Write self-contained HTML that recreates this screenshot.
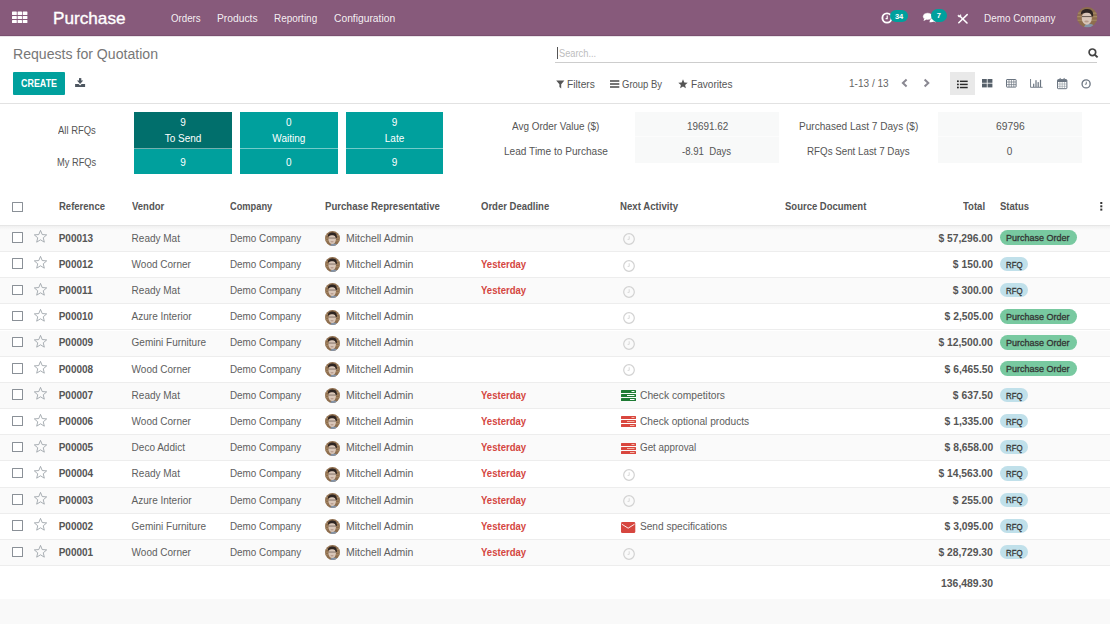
<!DOCTYPE html>
<html><head><meta charset="utf-8"><title>Requests for Quotation</title>
<style>
html,body{margin:0;padding:0;width:1110px;height:624px;overflow:hidden;background:#fff;}
body{position:relative;font-family:"Liberation Sans", sans-serif;}
.t{position:absolute;white-space:nowrap;line-height:1;}
.b{position:absolute;}
svg.b{overflow:visible;}
</style></head><body>
<div class="b" style="left:0.00px;top:0.00px;width:1110.00px;height:624.00px;background:#ffffff;"></div>
<div class="b" style="left:0.00px;top:598.70px;width:1110.00px;height:25.30px;background:#f9f9f9;"></div>
<div class="b" style="left:0.00px;top:0.00px;width:1110.00px;height:35.20px;background:#875A7B;"></div>
<div class="b" style="left:0.00px;top:35.20px;width:1110.00px;height:1.00px;background:#7a4f6f;"></div>
<div class="b" style="left:0.00px;top:36.20px;width:1110.00px;height:1.00px;background:#e9e4e8;"></div>
<svg class="b" style="left:12.00px;top:11.00px;" width="16" height="13" viewBox="0 0 16 13"><rect x="0.00" y="0.50" width="4.80" height="3.50" rx="0.6" fill="#fff"/><rect x="5.60" y="0.50" width="4.40" height="3.50" rx="0.6" fill="#fff"/><rect x="10.70" y="0.50" width="4.70" height="3.50" rx="0.6" fill="#fff"/><rect x="0.00" y="4.90" width="4.80" height="3.10" rx="0.6" fill="#fff"/><rect x="5.60" y="4.90" width="4.40" height="3.10" rx="0.6" fill="#fff"/><rect x="10.70" y="4.90" width="4.70" height="3.10" rx="0.6" fill="#fff"/><rect x="0.00" y="8.90" width="4.80" height="3.10" rx="0.6" fill="#fff"/><rect x="5.60" y="8.90" width="4.40" height="3.10" rx="0.6" fill="#fff"/><rect x="10.70" y="8.90" width="4.70" height="3.10" rx="0.6" fill="#fff"/></svg>
<div class="t" style="left:52.79px;top:10.00px;font-size:17px;color:#ffffff;transform:scaleX(1.0099);transform-origin:0 0;-webkit-text-stroke:0.35px #fff;">Purchase</div>
<div class="t" style="left:171.00px;top:14.00px;font-size:10px;color:rgba(255,255,255,0.92);transform:scaleX(0.9710);transform-origin:0 0;">Orders</div>
<div class="t" style="left:216.90px;top:14.00px;font-size:10px;color:rgba(255,255,255,0.92);transform:scaleX(1.0275);transform-origin:0 0;">Products</div>
<div class="t" style="left:274.20px;top:14.00px;font-size:10px;color:rgba(255,255,255,0.92);transform:scaleX(0.9955);transform-origin:0 0;">Reporting</div>
<div class="t" style="left:333.60px;top:14.00px;font-size:10px;color:rgba(255,255,255,0.92);transform:scaleX(1.0283);transform-origin:0 0;">Configuration</div>
<svg class="b" style="left:881.40px;top:11.50px;" width="12" height="12" viewBox="0 0 12 12"><circle cx="6" cy="6" r="4.6" fill="none" stroke="#fff" stroke-width="1.9"/><path d="M6.2 3.6V6.6H4.6" fill="none" stroke="#fff" stroke-width="1.2"/></svg>
<div class="b" style="left:890.20px;top:9.50px;width:17.80px;height:12.70px;background:#00A09D;border-radius:6.4px;"></div>
<div class="t" style="left:890.20px;width:17.8px;text-align:center;top:13.00px;font-size:7.5px;color:#fff;font-weight:bold;">34</div>
<svg class="b" style="left:922.00px;top:11.00px;" width="15" height="13" viewBox="0 0 15 13"><path d="M7.4 11.2 C9 11.6 11 11.2 12.2 10.6 L13.6 11.8 L13.2 9.8 C14 9 14.2 8 13.8 7 C13 5.6 11 5 9 5.2 Z" fill="#fff"/><ellipse cx="5.6" cy="5.4" rx="4.8" ry="3.6" fill="#fff" stroke="#875A7B" stroke-width="0.5"/><path d="M2.2 7.6 L1.6 10 L4.6 8.6 Z" fill="#fff"/></svg>
<div class="b" style="left:931.10px;top:8.60px;width:15.60px;height:13.20px;background:#00A09D;border-radius:7px;"></div>
<div class="t" style="left:931.10px;width:15.6px;text-align:center;top:12.00px;font-size:7.5px;color:#fff;font-weight:bold;">7</div>
<svg class="b" style="left:957.00px;top:13.00px;" width="12" height="11" viewBox="0 0 12 11"><path d="M1.8 9.8 L10.2 1.6" stroke="#fff" stroke-width="1.5" stroke-linecap="round"/><path d="M2.8 3 L10 10" stroke="#fff" stroke-width="1.6" stroke-linecap="round"/><path d="M0.6 2.6 C0.8 4.2 2.4 4.8 3.6 4 C4.6 3.2 4.4 1.6 3.6 1 L3.2 2.6 L2 2.8 L1.4 1.4 Z" fill="#fff"/></svg>
<div class="t" style="left:984.10px;top:14.00px;font-size:10px;color:rgba(255,255,255,0.92);transform:scaleX(0.9890);transform-origin:0 0;">Demo Company</div>
<svg class="b" style="left:1076.90px;top:7.10px" width="20.40" height="20.40" viewBox="0 0 20 20">
<defs><clipPath id="cnav"><circle cx="10" cy="10" r="10"/></clipPath></defs>
<g clip-path="url(#cnav)">
<rect width="20" height="20" fill="#8e6e4e"/>
<path d="M0 6 H20 M0 9.5 H20 M0 13 H20" stroke="#a88a66" stroke-width="1.2"/>
<path d="M7 20 C7.5 17 9.5 16.5 12 16.5 C14.5 16.5 16.5 17.5 17 20 Z" fill="#8494a8"/>
<ellipse cx="9.6" cy="11" rx="4.9" ry="6.4" fill="#d9c6b8"/>
<path d="M3.8 7.6 C3.6 3.2 7 1.8 10.6 2 C14.2 2.2 16.4 4.4 15.8 9.6 L14.4 9 C14.2 6.8 12.6 5.6 10.4 5.6 C8 5.6 5.6 6.2 3.8 7.6 Z" fill="#2e2522"/>
<path d="M4.8 9.4 H14.6" stroke="#4a3c36" stroke-width="0.8"/>
<ellipse cx="9.4" cy="14.2" rx="2.2" ry="1" fill="#b89c8c"/>
</g></svg>
<div class="t" style="left:13.00px;top:47.00px;font-size:14px;color:#777777;transform:scaleX(1.0069);transform-origin:0 0;">Requests for Quotation</div>
<div class="b" style="left:555.00px;top:61.50px;width:542.40px;height:1.20px;background:#cdcdcd;"></div>
<div class="b" style="left:557.00px;top:47.00px;width:1.00px;height:12.00px;background:#555;"></div>
<div class="t" style="left:558.50px;top:49.00px;font-size:10px;color:#bdbdbd;transform:scaleX(0.9275);transform-origin:0 0;">Search...</div>
<svg class="b" style="left:1087.50px;top:47.60px;" width="11" height="10" viewBox="0 0 11 10"><circle cx="4.4" cy="4.3" r="3.3" fill="none" stroke="#444" stroke-width="1.7"/><path d="M6.8 6.7 L9.6 9.4" stroke="#444" stroke-width="1.9"/></svg>
<div class="b" style="left:12.60px;top:71.50px;width:52.60px;height:23.50px;background:#00A09D;border-radius:1px;"></div>
<div class="t" style="left:20.70px;top:79.00px;font-size:10px;color:#ffffff;font-weight:bold;transform:scaleX(0.8927);transform-origin:0 0;">CREATE</div>
<svg class="b" style="left:74.00px;top:77.00px;" width="12" height="12" viewBox="0 0 12 12"><rect x="5" y="1.1" width="2.3" height="3.6" fill="#4d5660"/><path d="M3 3.6 H9.2 L6.1 6.9 Z" fill="#4d5660"/><path d="M1.1 7.1 H4.6 L6.1 8.4 L7.6 7.1 H11.1 V10.1 H1.1 Z" fill="#4d5660"/></svg>
<svg class="b" style="left:555.50px;top:80.00px;" width="9" height="9" viewBox="0 0 9 9"><path d="M0.2 0.4 H8.4 L5.2 4.2 V8.4 L3.4 7 V4.2 Z" fill="#555"/></svg>
<div class="t" style="left:566.90px;top:80.00px;font-size:10.2px;color:#555555;transform:scaleX(1.0036);transform-origin:0 0;">Filters</div>
<svg class="b" style="left:609.80px;top:80.40px;" width="10" height="8" viewBox="0 0 10 8"><rect x="0" y="0.2" width="9.3" height="1.6" fill="#555"/><rect x="0" y="3.2" width="9.3" height="1.6" fill="#555"/><rect x="0" y="6.2" width="9.3" height="1.6" fill="#555"/></svg>
<div class="t" style="left:622.00px;top:80.00px;font-size:10.2px;color:#555555;transform:scaleX(0.9318);transform-origin:0 0;">Group By</div>
<svg class="b" style="left:678.40px;top:78.90px;" width="10" height="10" viewBox="0 0 10 10"><path d="M5 0.3 L6.3 3.5 L9.7 3.7 L7.1 5.9 L7.9 9.3 L5 7.5 L2.1 9.3 L2.9 5.9 L0.3 3.7 L3.7 3.5 Z" fill="#555"/></svg>
<div class="t" style="left:691.10px;top:80.00px;font-size:10.2px;color:#555555;transform:scaleX(0.9905);transform-origin:0 0;">Favorites</div>
<div class="t" style="left:848.50px;top:79.00px;font-size:10px;color:#666666;transform:scaleX(1.0050);transform-origin:0 0;">1-13 / 13</div>
<svg class="b" style="left:901.00px;top:78.10px;" width="8" height="10" viewBox="0 0 8 10"><path d="M5.6 1.4 L1.9 4.9 L5.6 8.4" fill="none" stroke="#8a8892" stroke-width="2"/></svg>
<svg class="b" style="left:922.50px;top:78.10px;" width="8" height="10" viewBox="0 0 8 10"><path d="M1.6 1.4 L5.3 4.9 L1.6 8.4" fill="none" stroke="#8a8892" stroke-width="2"/></svg>
<div class="b" style="left:950.00px;top:71.90px;width:25.00px;height:23.30px;background:#e9e9e9;"></div>
<svg class="b" style="left:957.30px;top:79.60px;" width="12" height="9" viewBox="0 0 12 9"><circle cx="0.9" cy="1.3" r="0.95" fill="#222"/><circle cx="0.9" cy="4.4" r="0.95" fill="#222"/><circle cx="0.9" cy="7.5" r="0.95" fill="#222"/><rect x="2.9" y="0.6" width="7.8" height="1.45" fill="#2a2a2a"/><rect x="2.9" y="3.7" width="7.8" height="1.45" fill="#2a2a2a"/><rect x="2.9" y="6.8" width="7.8" height="1.45" fill="#2a2a2a"/></svg>
<svg class="b" style="left:982.00px;top:79.40px;" width="11" height="9" viewBox="0 0 11 9"><rect x="0" y="0" width="4.8" height="3.8" fill="#56606a"/><rect x="5.6" y="0" width="4.8" height="3.8" fill="#56606a"/><rect x="0" y="4.6" width="4.8" height="3.8" fill="#56606a"/><rect x="5.6" y="4.6" width="4.8" height="3.8" fill="#56606a"/></svg>
<svg class="b" style="left:1006.00px;top:79.40px;" width="11" height="9" viewBox="0 0 11 9"><rect x="0.5" y="0.5" width="9.6" height="7.6" rx="0.5" fill="none" stroke="#6a7480" stroke-width="1"/><path d="M0.5 3 H10 M0.5 5.6 H10 M3 0.5 V8 M5.4 0.5 V8 M7.8 0.5 V8" stroke="#6a7480" stroke-width="0.7"/></svg>
<svg class="b" style="left:1030.00px;top:79.00px;" width="13" height="9" viewBox="0 0 13 9"><path d="M0.55 0 V8.3 H12.6" fill="none" stroke="#6a7480" stroke-width="0.9"/><rect x="3.1" y="4.7" width="1.2" height="3.3" fill="#6a7480"/><rect x="5.4" y="1.2" width="1.2" height="6.8" fill="#6a7480"/><rect x="7.6" y="3.1" width="1.2" height="4.9" fill="#6a7480"/><rect x="9.9" y="0.8" width="1.2" height="7.2" fill="#6a7480"/></svg>
<svg class="b" style="left:1056.50px;top:78.00px;" width="11" height="11" viewBox="0 0 11 11"><rect x="0.5" y="1.7" width="9.4" height="9" rx="0.7" fill="none" stroke="#6a7480" stroke-width="1"/><rect x="0.5" y="1.7" width="9.4" height="2.3" fill="#6a7480"/><path d="M0.5 6 H10 M0.5 8.3 H10 M2.9 4 V10.5 M5.2 4 V10.5 M7.5 4 V10.5" stroke="#8a939c" stroke-width="0.55"/><path d="M2.2 2.6 V1.2 Q3.2 -0.2 4.2 1.2 V2.6" fill="none" stroke="#6a7480" stroke-width="0.9"/><path d="M6.2 2.6 V1.2 Q7.2 -0.2 8.2 1.2 V2.6" fill="none" stroke="#6a7480" stroke-width="0.9"/></svg>
<svg class="b" style="left:1080.50px;top:78.50px;" width="10" height="10" viewBox="0 0 10 10"><circle cx="5.1" cy="4.9" r="4.05" fill="none" stroke="#6a7480" stroke-width="1.3"/><path d="M5.3 2.7 V5.2 H3.9" fill="none" stroke="#6a7480" stroke-width="0.9"/></svg>
<div class="b" style="left:0.00px;top:102.60px;width:1110.00px;height:1.00px;background:#e2e2e2;"></div>
<div class="t" style="left:58.40px;top:126.00px;font-size:10px;color:#555555;transform:scaleX(0.9450);transform-origin:0 0;">All RFQs</div>
<div class="t" style="left:57.40px;top:158.00px;font-size:10px;color:#555555;transform:scaleX(0.9279);transform-origin:0 0;">My RFQs</div>
<div class="b" style="left:134.00px;top:112.00px;width:98.00px;height:36.40px;background:#016f6c;"></div>
<div class="b" style="left:134.00px;top:148.40px;width:98.00px;height:1.00px;background:rgba(255,255,255,0.45);background-color:#016f6c;background-image:linear-gradient(rgba(255,255,255,0.45),rgba(255,255,255,0.45));"></div>
<div class="b" style="left:134.00px;top:149.40px;width:98.00px;height:24.60px;background:#00A09D;"></div>
<div class="t" style="left:138.00px;width:90px;text-align:center;top:118.00px;font-size:10px;color:#fff;">9</div>
<div class="t" style="left:138.00px;width:90px;text-align:center;top:134.00px;font-size:10px;color:#fff;">To Send</div>
<div class="t" style="left:138.00px;width:90px;text-align:center;top:158.00px;font-size:10px;color:#fff;">9</div>
<div class="b" style="left:240.00px;top:112.00px;width:97.70px;height:36.40px;background:#00A09D;"></div>
<div class="b" style="left:240.00px;top:148.40px;width:97.70px;height:1.00px;background:rgba(255,255,255,0.45);background-color:#00A09D;background-image:linear-gradient(rgba(255,255,255,0.45),rgba(255,255,255,0.45));"></div>
<div class="b" style="left:240.00px;top:149.40px;width:97.70px;height:24.60px;background:#00A09D;"></div>
<div class="t" style="left:243.85px;width:90px;text-align:center;top:118.00px;font-size:10px;color:#fff;">0</div>
<div class="t" style="left:243.85px;width:90px;text-align:center;top:134.00px;font-size:10px;color:#fff;">Waiting</div>
<div class="t" style="left:243.85px;width:90px;text-align:center;top:158.00px;font-size:10px;color:#fff;">0</div>
<div class="b" style="left:345.60px;top:112.00px;width:97.80px;height:36.40px;background:#00A09D;"></div>
<div class="b" style="left:345.60px;top:148.40px;width:97.80px;height:1.00px;background:rgba(255,255,255,0.45);background-color:#00A09D;background-image:linear-gradient(rgba(255,255,255,0.45),rgba(255,255,255,0.45));"></div>
<div class="b" style="left:345.60px;top:149.40px;width:97.80px;height:24.60px;background:#00A09D;"></div>
<div class="t" style="left:349.50px;width:90px;text-align:center;top:118.00px;font-size:10px;color:#fff;">9</div>
<div class="t" style="left:349.50px;width:90px;text-align:center;top:134.00px;font-size:10px;color:#fff;">Late</div>
<div class="t" style="left:349.50px;width:90px;text-align:center;top:158.00px;font-size:10px;color:#fff;">9</div>
<div class="b" style="left:635.30px;top:112.00px;width:143.90px;height:51.40px;background:#f8f9f9;"></div>
<div class="b" style="left:937.60px;top:112.00px;width:144.10px;height:51.40px;background:#f8f9f9;"></div>
<div class="b" style="left:635.30px;top:136.40px;width:143.90px;height:0.90px;background:#fcfcfc;"></div>
<div class="b" style="left:937.60px;top:136.40px;width:144.10px;height:0.90px;background:#fcfcfc;"></div>
<div class="t" style="left:512.20px;top:122.00px;font-size:10px;color:#555555;transform:scaleX(0.9920);transform-origin:0 0;">Avg Order Value ($)</div>
<div class="t" style="left:504.00px;top:147.00px;font-size:10px;color:#555555;transform:scaleX(1.0097);transform-origin:0 0;">Lead Time to Purchase</div>
<div class="t" style="left:686.80px;top:122.00px;font-size:10px;color:#555555;transform:scaleX(0.9905);transform-origin:0 0;">19691.62</div>
<div class="t" style="left:681.90px;top:147.00px;font-size:10px;color:#555555;transform:scaleX(0.9615);transform-origin:0 0;">-8.91&nbsp; Days</div>
<div class="t" style="left:799.30px;top:122.00px;font-size:10px;color:#555555;transform:scaleX(1.0076);transform-origin:0 0;">Purchased Last 7 Days ($)</div>
<div class="t" style="left:807.30px;top:147.00px;font-size:10px;color:#555555;transform:scaleX(0.9771);transform-origin:0 0;">RFQs Sent Last 7 Days</div>
<div class="t" style="left:995.50px;top:122.00px;font-size:10px;color:#555555;transform:scaleX(1.0286);transform-origin:0 0;">69796</div>
<div class="t" style="left:944.60px;width:130px;text-align:center;top:147.00px;font-size:10px;color:#555555;">0</div>
<div class="b" style="left:12.10px;top:201.50px;width:10.6px;height:10.4px;border:1px solid #8a9097;box-sizing:border-box;border-radius:0.5px;background:#fff"></div>
<div class="t" style="left:58.70px;top:202.00px;font-size:10px;color:#555555;font-weight:bold;transform:scaleX(0.9510);transform-origin:0 0;">Reference</div>
<div class="t" style="left:132.20px;top:202.00px;font-size:10px;color:#555555;font-weight:bold;transform:scaleX(0.9500);transform-origin:0 0;">Vendor</div>
<div class="t" style="left:229.90px;top:202.00px;font-size:10px;color:#555555;font-weight:bold;transform:scaleX(0.9261);transform-origin:0 0;">Company</div>
<div class="t" style="left:325.00px;top:202.00px;font-size:10px;color:#555555;font-weight:bold;transform:scaleX(0.9608);transform-origin:0 0;">Purchase Representative</div>
<div class="t" style="left:481.00px;top:202.00px;font-size:10px;color:#555555;font-weight:bold;transform:scaleX(0.9514);transform-origin:0 0;">Order Deadline</div>
<div class="t" style="left:619.70px;top:202.00px;font-size:10px;color:#555555;font-weight:bold;transform:scaleX(0.9656);transform-origin:0 0;">Next Activity</div>
<div class="t" style="left:785.40px;top:202.00px;font-size:10px;color:#555555;font-weight:bold;transform:scaleX(0.9500);transform-origin:0 0;">Source Document</div>
<div class="t" style="left:999.70px;top:202.00px;font-size:10px;color:#555555;font-weight:bold;transform:scaleX(0.9484);transform-origin:0 0;">Status</div>
<div class="t" style="left:963.30px;top:202.00px;font-size:10px;color:#555555;font-weight:bold;transform:scaleX(0.9522);transform-origin:0 0;">Total</div>
<svg class="b" style="left:1099.50px;top:202.00px;" width="3" height="9" viewBox="0 0 3 9"><rect x="0.3" y="0" width="2" height="2" fill="#333"/><rect x="0.3" y="3.3" width="2" height="2" fill="#333"/><rect x="0.3" y="6.6" width="2" height="2" fill="#333"/></svg>
<div class="b" style="left:0.00px;top:224.80px;width:1110.00px;height:1.00px;background:#e6e6e6;"></div>
<div class="b" style="left:0.00px;top:225.80px;width:1110.00px;height:25.00px;background:#fafafa;"></div>
<div class="b" style="left:0.00px;top:225.80px;width:1110.00px;height:4.00px;background:linear-gradient(#f0f0f0,#fafafa);"></div>
<div class="b" style="left:0.00px;top:250.80px;width:1110.00px;height:1.00px;background:#ededed;"></div>
<div class="b" style="left:12.20px;top:232.20px;width:10.6px;height:10.4px;border:1px solid #8a9097;box-sizing:border-box;border-radius:0.5px;background:#fff"></div>
<svg class="b" style="left:34.45px;top:230.10px;" width="13" height="13" viewBox="0 0 13 13"><path d="M6.50 0.40 L8.20 4.55 L12.68 4.89 L9.26 7.80 L10.32 12.16 L6.50 9.80 L2.68 12.16 L3.74 7.80 L0.32 4.89 L4.80 4.55 Z" fill="none" stroke="#9aa0a6" stroke-width="0.85" stroke-linejoin="round"/></svg>
<div class="t" style="left:58.70px;top:234.00px;font-size:10px;color:#555555;font-weight:bold;">P00013</div>
<div class="t" style="left:131.60px;top:234.00px;font-size:10px;color:#5e5e5e;">Ready Mat</div>
<div class="t" style="left:229.90px;top:234.00px;font-size:10px;color:#5e5e5e;transform:scaleX(0.9863);transform-origin:0 0;">Demo Company</div>
<svg class="b" style="left:325.00px;top:230.90px" width="15.00" height="15.00" viewBox="0 0 20 20">
<defs><clipPath id="cr0"><circle cx="10" cy="10" r="10"/></clipPath></defs>
<g clip-path="url(#cr0)">
<rect width="20" height="20" fill="#8e6e4e"/>
<path d="M0 6 H20 M0 9.5 H20 M0 13 H20" stroke="#a88a66" stroke-width="1.2"/>
<path d="M7 20 C7.5 17 9.5 16.5 12 16.5 C14.5 16.5 16.5 17.5 17 20 Z" fill="#8494a8"/>
<ellipse cx="9.6" cy="11" rx="4.9" ry="6.4" fill="#d9c6b8"/>
<path d="M3.8 7.6 C3.6 3.2 7 1.8 10.6 2 C14.2 2.2 16.4 4.4 15.8 9.6 L14.4 9 C14.2 6.8 12.6 5.6 10.4 5.6 C8 5.6 5.6 6.2 3.8 7.6 Z" fill="#2e2522"/>
<path d="M4.8 9.4 H14.6" stroke="#4a3c36" stroke-width="0.8"/>
<ellipse cx="9.4" cy="14.2" rx="2.2" ry="1" fill="#b89c8c"/>
</g></svg>
<div class="t" style="left:345.60px;top:234.00px;font-size:10px;color:#5e5e5e;transform:scaleX(1.0446);transform-origin:0 0;">Mitchell Admin</div>
<svg class="b" style="left:622.60px;top:233.40px;" width="12" height="12" viewBox="0 0 12 12"><circle cx="6" cy="6" r="5.3" fill="none" stroke="#d2d2d2" stroke-width="1.2"/><path d="M6.2 3.2 V6.4 H4.6" fill="none" stroke="#d6d6d6" stroke-width="0.9"/></svg>
<div class="t" style="right:117.10px;text-align:right;top:234.00px;font-size:10px;color:#555555;font-weight:bold;transform:scaleX(1.03);transform-origin:100% 0;">$ 57,296.00</div>
<div class="b" style="left:999.50px;top:230.40px;width:77.00px;height:14.60px;background:#78c9a0;border-radius:8px;"></div>
<div class="t" style="left:1005.80px;top:233.00px;font-size:9.8px;color:#333333;transform:scaleX(0.9200);transform-origin:0 0;-webkit-text-stroke:0.3px #333;">Purchase Order</div>
<div class="b" style="left:0.00px;top:277.00px;width:1110.00px;height:1.00px;background:#ededed;"></div>
<div class="b" style="left:12.20px;top:258.40px;width:10.6px;height:10.4px;border:1px solid #8a9097;box-sizing:border-box;border-radius:0.5px;background:#fff"></div>
<svg class="b" style="left:34.45px;top:256.30px;" width="13" height="13" viewBox="0 0 13 13"><path d="M6.50 0.40 L8.20 4.55 L12.68 4.89 L9.26 7.80 L10.32 12.16 L6.50 9.80 L2.68 12.16 L3.74 7.80 L0.32 4.89 L4.80 4.55 Z" fill="none" stroke="#9aa0a6" stroke-width="0.85" stroke-linejoin="round"/></svg>
<div class="t" style="left:58.70px;top:260.00px;font-size:10px;color:#555555;font-weight:bold;">P00012</div>
<div class="t" style="left:131.60px;top:260.00px;font-size:10px;color:#5e5e5e;">Wood Corner</div>
<div class="t" style="left:229.90px;top:260.00px;font-size:10px;color:#5e5e5e;transform:scaleX(0.9863);transform-origin:0 0;">Demo Company</div>
<svg class="b" style="left:325.00px;top:257.10px" width="15.00" height="15.00" viewBox="0 0 20 20">
<defs><clipPath id="cr1"><circle cx="10" cy="10" r="10"/></clipPath></defs>
<g clip-path="url(#cr1)">
<rect width="20" height="20" fill="#8e6e4e"/>
<path d="M0 6 H20 M0 9.5 H20 M0 13 H20" stroke="#a88a66" stroke-width="1.2"/>
<path d="M7 20 C7.5 17 9.5 16.5 12 16.5 C14.5 16.5 16.5 17.5 17 20 Z" fill="#8494a8"/>
<ellipse cx="9.6" cy="11" rx="4.9" ry="6.4" fill="#d9c6b8"/>
<path d="M3.8 7.6 C3.6 3.2 7 1.8 10.6 2 C14.2 2.2 16.4 4.4 15.8 9.6 L14.4 9 C14.2 6.8 12.6 5.6 10.4 5.6 C8 5.6 5.6 6.2 3.8 7.6 Z" fill="#2e2522"/>
<path d="M4.8 9.4 H14.6" stroke="#4a3c36" stroke-width="0.8"/>
<ellipse cx="9.4" cy="14.2" rx="2.2" ry="1" fill="#b89c8c"/>
</g></svg>
<div class="t" style="left:345.60px;top:260.00px;font-size:10px;color:#5e5e5e;transform:scaleX(1.0446);transform-origin:0 0;">Mitchell Admin</div>
<div class="t" style="left:481.00px;top:260.00px;font-size:10px;color:#d4463f;font-weight:bold;transform:scaleX(0.9542);transform-origin:0 0;">Yesterday</div>
<svg class="b" style="left:622.60px;top:259.60px;" width="12" height="12" viewBox="0 0 12 12"><circle cx="6" cy="6" r="5.3" fill="none" stroke="#d2d2d2" stroke-width="1.2"/><path d="M6.2 3.2 V6.4 H4.6" fill="none" stroke="#d6d6d6" stroke-width="0.9"/></svg>
<div class="t" style="right:117.10px;text-align:right;top:260.00px;font-size:10px;color:#555555;font-weight:bold;transform:scaleX(1.03);transform-origin:100% 0;">$ 150.00</div>
<div class="b" style="left:999.50px;top:256.80px;width:28.90px;height:14.30px;background:#c0e0ea;border-radius:8px;"></div>
<div class="t" style="left:1005.50px;top:260.00px;font-size:9.8px;color:#333333;transform:scaleX(0.8000);transform-origin:0 0;-webkit-text-stroke:0.3px #333;">RFQ</div>
<div class="b" style="left:0.00px;top:278.20px;width:1110.00px;height:25.00px;background:#fafafa;"></div>
<div class="b" style="left:0.00px;top:303.20px;width:1110.00px;height:1.00px;background:#ededed;"></div>
<div class="b" style="left:12.20px;top:284.60px;width:10.6px;height:10.4px;border:1px solid #8a9097;box-sizing:border-box;border-radius:0.5px;background:#fff"></div>
<svg class="b" style="left:34.45px;top:282.50px;" width="13" height="13" viewBox="0 0 13 13"><path d="M6.50 0.40 L8.20 4.55 L12.68 4.89 L9.26 7.80 L10.32 12.16 L6.50 9.80 L2.68 12.16 L3.74 7.80 L0.32 4.89 L4.80 4.55 Z" fill="none" stroke="#9aa0a6" stroke-width="0.85" stroke-linejoin="round"/></svg>
<div class="t" style="left:58.70px;top:286.00px;font-size:10px;color:#555555;font-weight:bold;">P00011</div>
<div class="t" style="left:131.60px;top:286.00px;font-size:10px;color:#5e5e5e;">Ready Mat</div>
<div class="t" style="left:229.90px;top:286.00px;font-size:10px;color:#5e5e5e;transform:scaleX(0.9863);transform-origin:0 0;">Demo Company</div>
<svg class="b" style="left:325.00px;top:283.30px" width="15.00" height="15.00" viewBox="0 0 20 20">
<defs><clipPath id="cr2"><circle cx="10" cy="10" r="10"/></clipPath></defs>
<g clip-path="url(#cr2)">
<rect width="20" height="20" fill="#8e6e4e"/>
<path d="M0 6 H20 M0 9.5 H20 M0 13 H20" stroke="#a88a66" stroke-width="1.2"/>
<path d="M7 20 C7.5 17 9.5 16.5 12 16.5 C14.5 16.5 16.5 17.5 17 20 Z" fill="#8494a8"/>
<ellipse cx="9.6" cy="11" rx="4.9" ry="6.4" fill="#d9c6b8"/>
<path d="M3.8 7.6 C3.6 3.2 7 1.8 10.6 2 C14.2 2.2 16.4 4.4 15.8 9.6 L14.4 9 C14.2 6.8 12.6 5.6 10.4 5.6 C8 5.6 5.6 6.2 3.8 7.6 Z" fill="#2e2522"/>
<path d="M4.8 9.4 H14.6" stroke="#4a3c36" stroke-width="0.8"/>
<ellipse cx="9.4" cy="14.2" rx="2.2" ry="1" fill="#b89c8c"/>
</g></svg>
<div class="t" style="left:345.60px;top:286.00px;font-size:10px;color:#5e5e5e;transform:scaleX(1.0446);transform-origin:0 0;">Mitchell Admin</div>
<div class="t" style="left:481.00px;top:286.00px;font-size:10px;color:#d4463f;font-weight:bold;transform:scaleX(0.9542);transform-origin:0 0;">Yesterday</div>
<svg class="b" style="left:622.60px;top:285.80px;" width="12" height="12" viewBox="0 0 12 12"><circle cx="6" cy="6" r="5.3" fill="none" stroke="#d2d2d2" stroke-width="1.2"/><path d="M6.2 3.2 V6.4 H4.6" fill="none" stroke="#d6d6d6" stroke-width="0.9"/></svg>
<div class="t" style="right:117.10px;text-align:right;top:286.00px;font-size:10px;color:#555555;font-weight:bold;transform:scaleX(1.03);transform-origin:100% 0;">$ 300.00</div>
<div class="b" style="left:999.50px;top:283.00px;width:28.90px;height:14.30px;background:#c0e0ea;border-radius:8px;"></div>
<div class="t" style="left:1005.50px;top:286.00px;font-size:9.8px;color:#333333;transform:scaleX(0.8000);transform-origin:0 0;-webkit-text-stroke:0.3px #333;">RFQ</div>
<div class="b" style="left:0.00px;top:329.40px;width:1110.00px;height:1.00px;background:#ededed;"></div>
<div class="b" style="left:12.20px;top:310.80px;width:10.6px;height:10.4px;border:1px solid #8a9097;box-sizing:border-box;border-radius:0.5px;background:#fff"></div>
<svg class="b" style="left:34.45px;top:308.70px;" width="13" height="13" viewBox="0 0 13 13"><path d="M6.50 0.40 L8.20 4.55 L12.68 4.89 L9.26 7.80 L10.32 12.16 L6.50 9.80 L2.68 12.16 L3.74 7.80 L0.32 4.89 L4.80 4.55 Z" fill="none" stroke="#9aa0a6" stroke-width="0.85" stroke-linejoin="round"/></svg>
<div class="t" style="left:58.70px;top:312.00px;font-size:10px;color:#555555;font-weight:bold;">P00010</div>
<div class="t" style="left:131.60px;top:312.00px;font-size:10px;color:#5e5e5e;">Azure Interior</div>
<div class="t" style="left:229.90px;top:312.00px;font-size:10px;color:#5e5e5e;transform:scaleX(0.9863);transform-origin:0 0;">Demo Company</div>
<svg class="b" style="left:325.00px;top:309.50px" width="15.00" height="15.00" viewBox="0 0 20 20">
<defs><clipPath id="cr3"><circle cx="10" cy="10" r="10"/></clipPath></defs>
<g clip-path="url(#cr3)">
<rect width="20" height="20" fill="#8e6e4e"/>
<path d="M0 6 H20 M0 9.5 H20 M0 13 H20" stroke="#a88a66" stroke-width="1.2"/>
<path d="M7 20 C7.5 17 9.5 16.5 12 16.5 C14.5 16.5 16.5 17.5 17 20 Z" fill="#8494a8"/>
<ellipse cx="9.6" cy="11" rx="4.9" ry="6.4" fill="#d9c6b8"/>
<path d="M3.8 7.6 C3.6 3.2 7 1.8 10.6 2 C14.2 2.2 16.4 4.4 15.8 9.6 L14.4 9 C14.2 6.8 12.6 5.6 10.4 5.6 C8 5.6 5.6 6.2 3.8 7.6 Z" fill="#2e2522"/>
<path d="M4.8 9.4 H14.6" stroke="#4a3c36" stroke-width="0.8"/>
<ellipse cx="9.4" cy="14.2" rx="2.2" ry="1" fill="#b89c8c"/>
</g></svg>
<div class="t" style="left:345.60px;top:312.00px;font-size:10px;color:#5e5e5e;transform:scaleX(1.0446);transform-origin:0 0;">Mitchell Admin</div>
<svg class="b" style="left:622.60px;top:312.00px;" width="12" height="12" viewBox="0 0 12 12"><circle cx="6" cy="6" r="5.3" fill="none" stroke="#d2d2d2" stroke-width="1.2"/><path d="M6.2 3.2 V6.4 H4.6" fill="none" stroke="#d6d6d6" stroke-width="0.9"/></svg>
<div class="t" style="right:117.10px;text-align:right;top:312.00px;font-size:10px;color:#555555;font-weight:bold;transform:scaleX(1.03);transform-origin:100% 0;">$ 2,505.00</div>
<div class="b" style="left:999.50px;top:309.00px;width:77.00px;height:14.60px;background:#78c9a0;border-radius:8px;"></div>
<div class="t" style="left:1005.80px;top:312.00px;font-size:9.8px;color:#333333;transform:scaleX(0.9200);transform-origin:0 0;-webkit-text-stroke:0.3px #333;">Purchase Order</div>
<div class="b" style="left:0.00px;top:330.60px;width:1110.00px;height:25.00px;background:#fafafa;"></div>
<div class="b" style="left:0.00px;top:355.60px;width:1110.00px;height:1.00px;background:#ededed;"></div>
<div class="b" style="left:12.20px;top:337.00px;width:10.6px;height:10.4px;border:1px solid #8a9097;box-sizing:border-box;border-radius:0.5px;background:#fff"></div>
<svg class="b" style="left:34.45px;top:334.90px;" width="13" height="13" viewBox="0 0 13 13"><path d="M6.50 0.40 L8.20 4.55 L12.68 4.89 L9.26 7.80 L10.32 12.16 L6.50 9.80 L2.68 12.16 L3.74 7.80 L0.32 4.89 L4.80 4.55 Z" fill="none" stroke="#9aa0a6" stroke-width="0.85" stroke-linejoin="round"/></svg>
<div class="t" style="left:58.70px;top:338.00px;font-size:10px;color:#555555;font-weight:bold;">P00009</div>
<div class="t" style="left:131.60px;top:338.00px;font-size:10px;color:#5e5e5e;">Gemini Furniture</div>
<div class="t" style="left:229.90px;top:338.00px;font-size:10px;color:#5e5e5e;transform:scaleX(0.9863);transform-origin:0 0;">Demo Company</div>
<svg class="b" style="left:325.00px;top:335.70px" width="15.00" height="15.00" viewBox="0 0 20 20">
<defs><clipPath id="cr4"><circle cx="10" cy="10" r="10"/></clipPath></defs>
<g clip-path="url(#cr4)">
<rect width="20" height="20" fill="#8e6e4e"/>
<path d="M0 6 H20 M0 9.5 H20 M0 13 H20" stroke="#a88a66" stroke-width="1.2"/>
<path d="M7 20 C7.5 17 9.5 16.5 12 16.5 C14.5 16.5 16.5 17.5 17 20 Z" fill="#8494a8"/>
<ellipse cx="9.6" cy="11" rx="4.9" ry="6.4" fill="#d9c6b8"/>
<path d="M3.8 7.6 C3.6 3.2 7 1.8 10.6 2 C14.2 2.2 16.4 4.4 15.8 9.6 L14.4 9 C14.2 6.8 12.6 5.6 10.4 5.6 C8 5.6 5.6 6.2 3.8 7.6 Z" fill="#2e2522"/>
<path d="M4.8 9.4 H14.6" stroke="#4a3c36" stroke-width="0.8"/>
<ellipse cx="9.4" cy="14.2" rx="2.2" ry="1" fill="#b89c8c"/>
</g></svg>
<div class="t" style="left:345.60px;top:338.00px;font-size:10px;color:#5e5e5e;transform:scaleX(1.0446);transform-origin:0 0;">Mitchell Admin</div>
<svg class="b" style="left:622.60px;top:338.20px;" width="12" height="12" viewBox="0 0 12 12"><circle cx="6" cy="6" r="5.3" fill="none" stroke="#d2d2d2" stroke-width="1.2"/><path d="M6.2 3.2 V6.4 H4.6" fill="none" stroke="#d6d6d6" stroke-width="0.9"/></svg>
<div class="t" style="right:117.10px;text-align:right;top:338.00px;font-size:10px;color:#555555;font-weight:bold;transform:scaleX(1.03);transform-origin:100% 0;">$ 12,500.00</div>
<div class="b" style="left:999.50px;top:335.20px;width:77.00px;height:14.60px;background:#78c9a0;border-radius:8px;"></div>
<div class="t" style="left:1005.80px;top:338.00px;font-size:9.8px;color:#333333;transform:scaleX(0.9200);transform-origin:0 0;-webkit-text-stroke:0.3px #333;">Purchase Order</div>
<div class="b" style="left:0.00px;top:381.80px;width:1110.00px;height:1.00px;background:#ededed;"></div>
<div class="b" style="left:12.20px;top:363.20px;width:10.6px;height:10.4px;border:1px solid #8a9097;box-sizing:border-box;border-radius:0.5px;background:#fff"></div>
<svg class="b" style="left:34.45px;top:361.10px;" width="13" height="13" viewBox="0 0 13 13"><path d="M6.50 0.40 L8.20 4.55 L12.68 4.89 L9.26 7.80 L10.32 12.16 L6.50 9.80 L2.68 12.16 L3.74 7.80 L0.32 4.89 L4.80 4.55 Z" fill="none" stroke="#9aa0a6" stroke-width="0.85" stroke-linejoin="round"/></svg>
<div class="t" style="left:58.70px;top:365.00px;font-size:10px;color:#555555;font-weight:bold;">P00008</div>
<div class="t" style="left:131.60px;top:365.00px;font-size:10px;color:#5e5e5e;">Wood Corner</div>
<div class="t" style="left:229.90px;top:365.00px;font-size:10px;color:#5e5e5e;transform:scaleX(0.9863);transform-origin:0 0;">Demo Company</div>
<svg class="b" style="left:325.00px;top:361.90px" width="15.00" height="15.00" viewBox="0 0 20 20">
<defs><clipPath id="cr5"><circle cx="10" cy="10" r="10"/></clipPath></defs>
<g clip-path="url(#cr5)">
<rect width="20" height="20" fill="#8e6e4e"/>
<path d="M0 6 H20 M0 9.5 H20 M0 13 H20" stroke="#a88a66" stroke-width="1.2"/>
<path d="M7 20 C7.5 17 9.5 16.5 12 16.5 C14.5 16.5 16.5 17.5 17 20 Z" fill="#8494a8"/>
<ellipse cx="9.6" cy="11" rx="4.9" ry="6.4" fill="#d9c6b8"/>
<path d="M3.8 7.6 C3.6 3.2 7 1.8 10.6 2 C14.2 2.2 16.4 4.4 15.8 9.6 L14.4 9 C14.2 6.8 12.6 5.6 10.4 5.6 C8 5.6 5.6 6.2 3.8 7.6 Z" fill="#2e2522"/>
<path d="M4.8 9.4 H14.6" stroke="#4a3c36" stroke-width="0.8"/>
<ellipse cx="9.4" cy="14.2" rx="2.2" ry="1" fill="#b89c8c"/>
</g></svg>
<div class="t" style="left:345.60px;top:365.00px;font-size:10px;color:#5e5e5e;transform:scaleX(1.0446);transform-origin:0 0;">Mitchell Admin</div>
<svg class="b" style="left:622.60px;top:364.40px;" width="12" height="12" viewBox="0 0 12 12"><circle cx="6" cy="6" r="5.3" fill="none" stroke="#d2d2d2" stroke-width="1.2"/><path d="M6.2 3.2 V6.4 H4.6" fill="none" stroke="#d6d6d6" stroke-width="0.9"/></svg>
<div class="t" style="right:117.10px;text-align:right;top:365.00px;font-size:10px;color:#555555;font-weight:bold;transform:scaleX(1.03);transform-origin:100% 0;">$ 6,465.50</div>
<div class="b" style="left:999.50px;top:361.40px;width:77.00px;height:14.60px;background:#78c9a0;border-radius:8px;"></div>
<div class="t" style="left:1005.80px;top:364.00px;font-size:9.8px;color:#333333;transform:scaleX(0.9200);transform-origin:0 0;-webkit-text-stroke:0.3px #333;">Purchase Order</div>
<div class="b" style="left:0.00px;top:383.00px;width:1110.00px;height:25.00px;background:#fafafa;"></div>
<div class="b" style="left:0.00px;top:408.00px;width:1110.00px;height:1.00px;background:#ededed;"></div>
<div class="b" style="left:12.20px;top:389.40px;width:10.6px;height:10.4px;border:1px solid #8a9097;box-sizing:border-box;border-radius:0.5px;background:#fff"></div>
<svg class="b" style="left:34.45px;top:387.30px;" width="13" height="13" viewBox="0 0 13 13"><path d="M6.50 0.40 L8.20 4.55 L12.68 4.89 L9.26 7.80 L10.32 12.16 L6.50 9.80 L2.68 12.16 L3.74 7.80 L0.32 4.89 L4.80 4.55 Z" fill="none" stroke="#9aa0a6" stroke-width="0.85" stroke-linejoin="round"/></svg>
<div class="t" style="left:58.70px;top:391.00px;font-size:10px;color:#555555;font-weight:bold;">P00007</div>
<div class="t" style="left:131.60px;top:391.00px;font-size:10px;color:#5e5e5e;">Ready Mat</div>
<div class="t" style="left:229.90px;top:391.00px;font-size:10px;color:#5e5e5e;transform:scaleX(0.9863);transform-origin:0 0;">Demo Company</div>
<svg class="b" style="left:325.00px;top:388.10px" width="15.00" height="15.00" viewBox="0 0 20 20">
<defs><clipPath id="cr6"><circle cx="10" cy="10" r="10"/></clipPath></defs>
<g clip-path="url(#cr6)">
<rect width="20" height="20" fill="#8e6e4e"/>
<path d="M0 6 H20 M0 9.5 H20 M0 13 H20" stroke="#a88a66" stroke-width="1.2"/>
<path d="M7 20 C7.5 17 9.5 16.5 12 16.5 C14.5 16.5 16.5 17.5 17 20 Z" fill="#8494a8"/>
<ellipse cx="9.6" cy="11" rx="4.9" ry="6.4" fill="#d9c6b8"/>
<path d="M3.8 7.6 C3.6 3.2 7 1.8 10.6 2 C14.2 2.2 16.4 4.4 15.8 9.6 L14.4 9 C14.2 6.8 12.6 5.6 10.4 5.6 C8 5.6 5.6 6.2 3.8 7.6 Z" fill="#2e2522"/>
<path d="M4.8 9.4 H14.6" stroke="#4a3c36" stroke-width="0.8"/>
<ellipse cx="9.4" cy="14.2" rx="2.2" ry="1" fill="#b89c8c"/>
</g></svg>
<div class="t" style="left:345.60px;top:391.00px;font-size:10px;color:#5e5e5e;transform:scaleX(1.0446);transform-origin:0 0;">Mitchell Admin</div>
<div class="t" style="left:481.00px;top:391.00px;font-size:10px;color:#d4463f;font-weight:bold;transform:scaleX(0.9542);transform-origin:0 0;">Yesterday</div>
<svg class="b" style="left:621.20px;top:390.20px;" width="15" height="11" viewBox="0 0 15 11"><rect x="0" y="0" width="15" height="3" rx="0.5" fill="#1e7b34"/><rect x="0" y="4" width="15" height="3" rx="0.5" fill="#1e7b34"/><rect x="0" y="8" width="15" height="3" rx="0.5" fill="#1e7b34"/><rect x="10.5" y="1" width="3" height="1" fill="#ffffff"/><rect x="6" y="5" width="7.5" height="1" fill="#ffffff"/><rect x="9" y="9" width="4.5" height="1" fill="#ffffff"/></svg>
<div class="t" style="left:640.00px;top:391.00px;font-size:10px;color:#5e5e5e;transform:scaleX(1.0265);transform-origin:0 0;">Check competitors</div>
<div class="t" style="right:117.10px;text-align:right;top:391.00px;font-size:10px;color:#555555;font-weight:bold;transform:scaleX(1.03);transform-origin:100% 0;">$ 637.50</div>
<div class="b" style="left:999.50px;top:387.80px;width:28.90px;height:14.30px;background:#c0e0ea;border-radius:8px;"></div>
<div class="t" style="left:1005.50px;top:391.00px;font-size:9.8px;color:#333333;transform:scaleX(0.8000);transform-origin:0 0;-webkit-text-stroke:0.3px #333;">RFQ</div>
<div class="b" style="left:0.00px;top:434.20px;width:1110.00px;height:1.00px;background:#ededed;"></div>
<div class="b" style="left:12.20px;top:415.60px;width:10.6px;height:10.4px;border:1px solid #8a9097;box-sizing:border-box;border-radius:0.5px;background:#fff"></div>
<svg class="b" style="left:34.45px;top:413.50px;" width="13" height="13" viewBox="0 0 13 13"><path d="M6.50 0.40 L8.20 4.55 L12.68 4.89 L9.26 7.80 L10.32 12.16 L6.50 9.80 L2.68 12.16 L3.74 7.80 L0.32 4.89 L4.80 4.55 Z" fill="none" stroke="#9aa0a6" stroke-width="0.85" stroke-linejoin="round"/></svg>
<div class="t" style="left:58.70px;top:417.00px;font-size:10px;color:#555555;font-weight:bold;">P00006</div>
<div class="t" style="left:131.60px;top:417.00px;font-size:10px;color:#5e5e5e;">Wood Corner</div>
<div class="t" style="left:229.90px;top:417.00px;font-size:10px;color:#5e5e5e;transform:scaleX(0.9863);transform-origin:0 0;">Demo Company</div>
<svg class="b" style="left:325.00px;top:414.30px" width="15.00" height="15.00" viewBox="0 0 20 20">
<defs><clipPath id="cr7"><circle cx="10" cy="10" r="10"/></clipPath></defs>
<g clip-path="url(#cr7)">
<rect width="20" height="20" fill="#8e6e4e"/>
<path d="M0 6 H20 M0 9.5 H20 M0 13 H20" stroke="#a88a66" stroke-width="1.2"/>
<path d="M7 20 C7.5 17 9.5 16.5 12 16.5 C14.5 16.5 16.5 17.5 17 20 Z" fill="#8494a8"/>
<ellipse cx="9.6" cy="11" rx="4.9" ry="6.4" fill="#d9c6b8"/>
<path d="M3.8 7.6 C3.6 3.2 7 1.8 10.6 2 C14.2 2.2 16.4 4.4 15.8 9.6 L14.4 9 C14.2 6.8 12.6 5.6 10.4 5.6 C8 5.6 5.6 6.2 3.8 7.6 Z" fill="#2e2522"/>
<path d="M4.8 9.4 H14.6" stroke="#4a3c36" stroke-width="0.8"/>
<ellipse cx="9.4" cy="14.2" rx="2.2" ry="1" fill="#b89c8c"/>
</g></svg>
<div class="t" style="left:345.60px;top:417.00px;font-size:10px;color:#5e5e5e;transform:scaleX(1.0446);transform-origin:0 0;">Mitchell Admin</div>
<div class="t" style="left:481.00px;top:417.00px;font-size:10px;color:#d4463f;font-weight:bold;transform:scaleX(0.9542);transform-origin:0 0;">Yesterday</div>
<svg class="b" style="left:621.20px;top:416.40px;" width="15" height="11" viewBox="0 0 15 11"><rect x="0" y="0" width="15" height="3" rx="0.5" fill="#d9463e"/><rect x="0" y="4" width="15" height="3" rx="0.5" fill="#d9463e"/><rect x="0" y="8" width="15" height="3" rx="0.5" fill="#d9463e"/><rect x="10.5" y="1" width="3" height="1" fill="#f3b8a6"/><rect x="6" y="5" width="7.5" height="1" fill="#f3b8a6"/><rect x="9" y="9" width="4.5" height="1" fill="#f3b8a6"/></svg>
<div class="t" style="left:640.00px;top:417.00px;font-size:10px;color:#5e5e5e;transform:scaleX(1.0176);transform-origin:0 0;">Check optional products</div>
<div class="t" style="right:117.10px;text-align:right;top:417.00px;font-size:10px;color:#555555;font-weight:bold;transform:scaleX(1.03);transform-origin:100% 0;">$ 1,335.00</div>
<div class="b" style="left:999.50px;top:414.00px;width:28.90px;height:14.30px;background:#c0e0ea;border-radius:8px;"></div>
<div class="t" style="left:1005.50px;top:417.00px;font-size:9.8px;color:#333333;transform:scaleX(0.8000);transform-origin:0 0;-webkit-text-stroke:0.3px #333;">RFQ</div>
<div class="b" style="left:0.00px;top:435.40px;width:1110.00px;height:25.00px;background:#fafafa;"></div>
<div class="b" style="left:0.00px;top:460.40px;width:1110.00px;height:1.00px;background:#ededed;"></div>
<div class="b" style="left:12.20px;top:441.80px;width:10.6px;height:10.4px;border:1px solid #8a9097;box-sizing:border-box;border-radius:0.5px;background:#fff"></div>
<svg class="b" style="left:34.45px;top:439.70px;" width="13" height="13" viewBox="0 0 13 13"><path d="M6.50 0.40 L8.20 4.55 L12.68 4.89 L9.26 7.80 L10.32 12.16 L6.50 9.80 L2.68 12.16 L3.74 7.80 L0.32 4.89 L4.80 4.55 Z" fill="none" stroke="#9aa0a6" stroke-width="0.85" stroke-linejoin="round"/></svg>
<div class="t" style="left:58.70px;top:443.00px;font-size:10px;color:#555555;font-weight:bold;">P00005</div>
<div class="t" style="left:131.60px;top:443.00px;font-size:10px;color:#5e5e5e;">Deco Addict</div>
<div class="t" style="left:229.90px;top:443.00px;font-size:10px;color:#5e5e5e;transform:scaleX(0.9863);transform-origin:0 0;">Demo Company</div>
<svg class="b" style="left:325.00px;top:440.50px" width="15.00" height="15.00" viewBox="0 0 20 20">
<defs><clipPath id="cr8"><circle cx="10" cy="10" r="10"/></clipPath></defs>
<g clip-path="url(#cr8)">
<rect width="20" height="20" fill="#8e6e4e"/>
<path d="M0 6 H20 M0 9.5 H20 M0 13 H20" stroke="#a88a66" stroke-width="1.2"/>
<path d="M7 20 C7.5 17 9.5 16.5 12 16.5 C14.5 16.5 16.5 17.5 17 20 Z" fill="#8494a8"/>
<ellipse cx="9.6" cy="11" rx="4.9" ry="6.4" fill="#d9c6b8"/>
<path d="M3.8 7.6 C3.6 3.2 7 1.8 10.6 2 C14.2 2.2 16.4 4.4 15.8 9.6 L14.4 9 C14.2 6.8 12.6 5.6 10.4 5.6 C8 5.6 5.6 6.2 3.8 7.6 Z" fill="#2e2522"/>
<path d="M4.8 9.4 H14.6" stroke="#4a3c36" stroke-width="0.8"/>
<ellipse cx="9.4" cy="14.2" rx="2.2" ry="1" fill="#b89c8c"/>
</g></svg>
<div class="t" style="left:345.60px;top:443.00px;font-size:10px;color:#5e5e5e;transform:scaleX(1.0446);transform-origin:0 0;">Mitchell Admin</div>
<div class="t" style="left:481.00px;top:443.00px;font-size:10px;color:#d4463f;font-weight:bold;transform:scaleX(0.9542);transform-origin:0 0;">Yesterday</div>
<svg class="b" style="left:621.20px;top:442.60px;" width="15" height="11" viewBox="0 0 15 11"><rect x="0" y="0" width="15" height="3" rx="0.5" fill="#d9463e"/><rect x="0" y="4" width="15" height="3" rx="0.5" fill="#d9463e"/><rect x="0" y="8" width="15" height="3" rx="0.5" fill="#d9463e"/><rect x="10.5" y="1" width="3" height="1" fill="#f3b8a6"/><rect x="6" y="5" width="7.5" height="1" fill="#f3b8a6"/><rect x="9" y="9" width="4.5" height="1" fill="#f3b8a6"/></svg>
<div class="t" style="left:640.00px;top:443.00px;font-size:10px;color:#5e5e5e;transform:scaleX(0.9828);transform-origin:0 0;">Get approval</div>
<div class="t" style="right:117.10px;text-align:right;top:443.00px;font-size:10px;color:#555555;font-weight:bold;transform:scaleX(1.03);transform-origin:100% 0;">$ 8,658.00</div>
<div class="b" style="left:999.50px;top:440.20px;width:28.90px;height:14.30px;background:#c0e0ea;border-radius:8px;"></div>
<div class="t" style="left:1005.50px;top:443.00px;font-size:9.8px;color:#333333;transform:scaleX(0.8000);transform-origin:0 0;-webkit-text-stroke:0.3px #333;">RFQ</div>
<div class="b" style="left:0.00px;top:486.60px;width:1110.00px;height:1.00px;background:#ededed;"></div>
<div class="b" style="left:12.20px;top:468.00px;width:10.6px;height:10.4px;border:1px solid #8a9097;box-sizing:border-box;border-radius:0.5px;background:#fff"></div>
<svg class="b" style="left:34.45px;top:465.90px;" width="13" height="13" viewBox="0 0 13 13"><path d="M6.50 0.40 L8.20 4.55 L12.68 4.89 L9.26 7.80 L10.32 12.16 L6.50 9.80 L2.68 12.16 L3.74 7.80 L0.32 4.89 L4.80 4.55 Z" fill="none" stroke="#9aa0a6" stroke-width="0.85" stroke-linejoin="round"/></svg>
<div class="t" style="left:58.70px;top:469.00px;font-size:10px;color:#555555;font-weight:bold;">P00004</div>
<div class="t" style="left:131.60px;top:469.00px;font-size:10px;color:#5e5e5e;">Ready Mat</div>
<div class="t" style="left:229.90px;top:469.00px;font-size:10px;color:#5e5e5e;transform:scaleX(0.9863);transform-origin:0 0;">Demo Company</div>
<svg class="b" style="left:325.00px;top:466.70px" width="15.00" height="15.00" viewBox="0 0 20 20">
<defs><clipPath id="cr9"><circle cx="10" cy="10" r="10"/></clipPath></defs>
<g clip-path="url(#cr9)">
<rect width="20" height="20" fill="#8e6e4e"/>
<path d="M0 6 H20 M0 9.5 H20 M0 13 H20" stroke="#a88a66" stroke-width="1.2"/>
<path d="M7 20 C7.5 17 9.5 16.5 12 16.5 C14.5 16.5 16.5 17.5 17 20 Z" fill="#8494a8"/>
<ellipse cx="9.6" cy="11" rx="4.9" ry="6.4" fill="#d9c6b8"/>
<path d="M3.8 7.6 C3.6 3.2 7 1.8 10.6 2 C14.2 2.2 16.4 4.4 15.8 9.6 L14.4 9 C14.2 6.8 12.6 5.6 10.4 5.6 C8 5.6 5.6 6.2 3.8 7.6 Z" fill="#2e2522"/>
<path d="M4.8 9.4 H14.6" stroke="#4a3c36" stroke-width="0.8"/>
<ellipse cx="9.4" cy="14.2" rx="2.2" ry="1" fill="#b89c8c"/>
</g></svg>
<div class="t" style="left:345.60px;top:469.00px;font-size:10px;color:#5e5e5e;transform:scaleX(1.0446);transform-origin:0 0;">Mitchell Admin</div>
<div class="t" style="left:481.00px;top:469.00px;font-size:10px;color:#d4463f;font-weight:bold;transform:scaleX(0.9542);transform-origin:0 0;">Yesterday</div>
<svg class="b" style="left:622.60px;top:469.20px;" width="12" height="12" viewBox="0 0 12 12"><circle cx="6" cy="6" r="5.3" fill="none" stroke="#d2d2d2" stroke-width="1.2"/><path d="M6.2 3.2 V6.4 H4.6" fill="none" stroke="#d6d6d6" stroke-width="0.9"/></svg>
<div class="t" style="right:117.10px;text-align:right;top:469.00px;font-size:10px;color:#555555;font-weight:bold;transform:scaleX(1.03);transform-origin:100% 0;">$ 14,563.00</div>
<div class="b" style="left:999.50px;top:466.40px;width:28.90px;height:14.30px;background:#c0e0ea;border-radius:8px;"></div>
<div class="t" style="left:1005.50px;top:469.00px;font-size:9.8px;color:#333333;transform:scaleX(0.8000);transform-origin:0 0;-webkit-text-stroke:0.3px #333;">RFQ</div>
<div class="b" style="left:0.00px;top:487.80px;width:1110.00px;height:25.00px;background:#fafafa;"></div>
<div class="b" style="left:0.00px;top:512.80px;width:1110.00px;height:1.00px;background:#ededed;"></div>
<div class="b" style="left:12.20px;top:494.20px;width:10.6px;height:10.4px;border:1px solid #8a9097;box-sizing:border-box;border-radius:0.5px;background:#fff"></div>
<svg class="b" style="left:34.45px;top:492.10px;" width="13" height="13" viewBox="0 0 13 13"><path d="M6.50 0.40 L8.20 4.55 L12.68 4.89 L9.26 7.80 L10.32 12.16 L6.50 9.80 L2.68 12.16 L3.74 7.80 L0.32 4.89 L4.80 4.55 Z" fill="none" stroke="#9aa0a6" stroke-width="0.85" stroke-linejoin="round"/></svg>
<div class="t" style="left:58.70px;top:496.00px;font-size:10px;color:#555555;font-weight:bold;">P00003</div>
<div class="t" style="left:131.60px;top:496.00px;font-size:10px;color:#5e5e5e;">Azure Interior</div>
<div class="t" style="left:229.90px;top:496.00px;font-size:10px;color:#5e5e5e;transform:scaleX(0.9863);transform-origin:0 0;">Demo Company</div>
<svg class="b" style="left:325.00px;top:492.90px" width="15.00" height="15.00" viewBox="0 0 20 20">
<defs><clipPath id="cr10"><circle cx="10" cy="10" r="10"/></clipPath></defs>
<g clip-path="url(#cr10)">
<rect width="20" height="20" fill="#8e6e4e"/>
<path d="M0 6 H20 M0 9.5 H20 M0 13 H20" stroke="#a88a66" stroke-width="1.2"/>
<path d="M7 20 C7.5 17 9.5 16.5 12 16.5 C14.5 16.5 16.5 17.5 17 20 Z" fill="#8494a8"/>
<ellipse cx="9.6" cy="11" rx="4.9" ry="6.4" fill="#d9c6b8"/>
<path d="M3.8 7.6 C3.6 3.2 7 1.8 10.6 2 C14.2 2.2 16.4 4.4 15.8 9.6 L14.4 9 C14.2 6.8 12.6 5.6 10.4 5.6 C8 5.6 5.6 6.2 3.8 7.6 Z" fill="#2e2522"/>
<path d="M4.8 9.4 H14.6" stroke="#4a3c36" stroke-width="0.8"/>
<ellipse cx="9.4" cy="14.2" rx="2.2" ry="1" fill="#b89c8c"/>
</g></svg>
<div class="t" style="left:345.60px;top:496.00px;font-size:10px;color:#5e5e5e;transform:scaleX(1.0446);transform-origin:0 0;">Mitchell Admin</div>
<div class="t" style="left:481.00px;top:496.00px;font-size:10px;color:#d4463f;font-weight:bold;transform:scaleX(0.9542);transform-origin:0 0;">Yesterday</div>
<svg class="b" style="left:622.60px;top:495.40px;" width="12" height="12" viewBox="0 0 12 12"><circle cx="6" cy="6" r="5.3" fill="none" stroke="#d2d2d2" stroke-width="1.2"/><path d="M6.2 3.2 V6.4 H4.6" fill="none" stroke="#d6d6d6" stroke-width="0.9"/></svg>
<div class="t" style="right:117.10px;text-align:right;top:496.00px;font-size:10px;color:#555555;font-weight:bold;transform:scaleX(1.03);transform-origin:100% 0;">$ 255.00</div>
<div class="b" style="left:999.50px;top:492.60px;width:28.90px;height:14.30px;background:#c0e0ea;border-radius:8px;"></div>
<div class="t" style="left:1005.50px;top:495.00px;font-size:9.8px;color:#333333;transform:scaleX(0.8000);transform-origin:0 0;-webkit-text-stroke:0.3px #333;">RFQ</div>
<div class="b" style="left:0.00px;top:539.00px;width:1110.00px;height:1.00px;background:#ededed;"></div>
<div class="b" style="left:12.20px;top:520.40px;width:10.6px;height:10.4px;border:1px solid #8a9097;box-sizing:border-box;border-radius:0.5px;background:#fff"></div>
<svg class="b" style="left:34.45px;top:518.30px;" width="13" height="13" viewBox="0 0 13 13"><path d="M6.50 0.40 L8.20 4.55 L12.68 4.89 L9.26 7.80 L10.32 12.16 L6.50 9.80 L2.68 12.16 L3.74 7.80 L0.32 4.89 L4.80 4.55 Z" fill="none" stroke="#9aa0a6" stroke-width="0.85" stroke-linejoin="round"/></svg>
<div class="t" style="left:58.70px;top:522.00px;font-size:10px;color:#555555;font-weight:bold;">P00002</div>
<div class="t" style="left:131.60px;top:522.00px;font-size:10px;color:#5e5e5e;">Gemini Furniture</div>
<div class="t" style="left:229.90px;top:522.00px;font-size:10px;color:#5e5e5e;transform:scaleX(0.9863);transform-origin:0 0;">Demo Company</div>
<svg class="b" style="left:325.00px;top:519.10px" width="15.00" height="15.00" viewBox="0 0 20 20">
<defs><clipPath id="cr11"><circle cx="10" cy="10" r="10"/></clipPath></defs>
<g clip-path="url(#cr11)">
<rect width="20" height="20" fill="#8e6e4e"/>
<path d="M0 6 H20 M0 9.5 H20 M0 13 H20" stroke="#a88a66" stroke-width="1.2"/>
<path d="M7 20 C7.5 17 9.5 16.5 12 16.5 C14.5 16.5 16.5 17.5 17 20 Z" fill="#8494a8"/>
<ellipse cx="9.6" cy="11" rx="4.9" ry="6.4" fill="#d9c6b8"/>
<path d="M3.8 7.6 C3.6 3.2 7 1.8 10.6 2 C14.2 2.2 16.4 4.4 15.8 9.6 L14.4 9 C14.2 6.8 12.6 5.6 10.4 5.6 C8 5.6 5.6 6.2 3.8 7.6 Z" fill="#2e2522"/>
<path d="M4.8 9.4 H14.6" stroke="#4a3c36" stroke-width="0.8"/>
<ellipse cx="9.4" cy="14.2" rx="2.2" ry="1" fill="#b89c8c"/>
</g></svg>
<div class="t" style="left:345.60px;top:522.00px;font-size:10px;color:#5e5e5e;transform:scaleX(1.0446);transform-origin:0 0;">Mitchell Admin</div>
<div class="t" style="left:481.00px;top:522.00px;font-size:10px;color:#d4463f;font-weight:bold;transform:scaleX(0.9542);transform-origin:0 0;">Yesterday</div>
<svg class="b" style="left:621.30px;top:522.00px;" width="15" height="12" viewBox="0 0 15 12"><rect x="0" y="0" width="14.3" height="11.1" rx="1.4" fill="#d6463f"/><path d="M0.8 2.2 L7.15 6.2 L13.5 2.2" fill="none" stroke="#fff" stroke-width="0.9"/></svg>
<div class="t" style="left:640.00px;top:522.00px;font-size:10px;color:#5e5e5e;transform:scaleX(1.0115);transform-origin:0 0;">Send specifications</div>
<div class="t" style="right:117.10px;text-align:right;top:522.00px;font-size:10px;color:#555555;font-weight:bold;transform:scaleX(1.03);transform-origin:100% 0;">$ 3,095.00</div>
<div class="b" style="left:999.50px;top:518.80px;width:28.90px;height:14.30px;background:#c0e0ea;border-radius:8px;"></div>
<div class="t" style="left:1005.50px;top:522.00px;font-size:9.8px;color:#333333;transform:scaleX(0.8000);transform-origin:0 0;-webkit-text-stroke:0.3px #333;">RFQ</div>
<div class="b" style="left:0.00px;top:540.20px;width:1110.00px;height:25.00px;background:#fafafa;"></div>
<div class="b" style="left:0.00px;top:565.20px;width:1110.00px;height:1.00px;background:#ededed;"></div>
<div class="b" style="left:12.20px;top:546.60px;width:10.6px;height:10.4px;border:1px solid #8a9097;box-sizing:border-box;border-radius:0.5px;background:#fff"></div>
<svg class="b" style="left:34.45px;top:544.50px;" width="13" height="13" viewBox="0 0 13 13"><path d="M6.50 0.40 L8.20 4.55 L12.68 4.89 L9.26 7.80 L10.32 12.16 L6.50 9.80 L2.68 12.16 L3.74 7.80 L0.32 4.89 L4.80 4.55 Z" fill="none" stroke="#9aa0a6" stroke-width="0.85" stroke-linejoin="round"/></svg>
<div class="t" style="left:58.70px;top:548.00px;font-size:10px;color:#555555;font-weight:bold;">P00001</div>
<div class="t" style="left:131.60px;top:548.00px;font-size:10px;color:#5e5e5e;">Wood Corner</div>
<div class="t" style="left:229.90px;top:548.00px;font-size:10px;color:#5e5e5e;transform:scaleX(0.9863);transform-origin:0 0;">Demo Company</div>
<svg class="b" style="left:325.00px;top:545.30px" width="15.00" height="15.00" viewBox="0 0 20 20">
<defs><clipPath id="cr12"><circle cx="10" cy="10" r="10"/></clipPath></defs>
<g clip-path="url(#cr12)">
<rect width="20" height="20" fill="#8e6e4e"/>
<path d="M0 6 H20 M0 9.5 H20 M0 13 H20" stroke="#a88a66" stroke-width="1.2"/>
<path d="M7 20 C7.5 17 9.5 16.5 12 16.5 C14.5 16.5 16.5 17.5 17 20 Z" fill="#8494a8"/>
<ellipse cx="9.6" cy="11" rx="4.9" ry="6.4" fill="#d9c6b8"/>
<path d="M3.8 7.6 C3.6 3.2 7 1.8 10.6 2 C14.2 2.2 16.4 4.4 15.8 9.6 L14.4 9 C14.2 6.8 12.6 5.6 10.4 5.6 C8 5.6 5.6 6.2 3.8 7.6 Z" fill="#2e2522"/>
<path d="M4.8 9.4 H14.6" stroke="#4a3c36" stroke-width="0.8"/>
<ellipse cx="9.4" cy="14.2" rx="2.2" ry="1" fill="#b89c8c"/>
</g></svg>
<div class="t" style="left:345.60px;top:548.00px;font-size:10px;color:#5e5e5e;transform:scaleX(1.0446);transform-origin:0 0;">Mitchell Admin</div>
<div class="t" style="left:481.00px;top:548.00px;font-size:10px;color:#d4463f;font-weight:bold;transform:scaleX(0.9542);transform-origin:0 0;">Yesterday</div>
<svg class="b" style="left:622.60px;top:547.80px;" width="12" height="12" viewBox="0 0 12 12"><circle cx="6" cy="6" r="5.3" fill="none" stroke="#d2d2d2" stroke-width="1.2"/><path d="M6.2 3.2 V6.4 H4.6" fill="none" stroke="#d6d6d6" stroke-width="0.9"/></svg>
<div class="t" style="right:117.10px;text-align:right;top:548.00px;font-size:10px;color:#555555;font-weight:bold;transform:scaleX(1.03);transform-origin:100% 0;">$ 28,729.30</div>
<div class="b" style="left:999.50px;top:545.00px;width:28.90px;height:14.30px;background:#c0e0ea;border-radius:8px;"></div>
<div class="t" style="left:1005.50px;top:548.00px;font-size:9.8px;color:#333333;transform:scaleX(0.8000);transform-origin:0 0;-webkit-text-stroke:0.3px #333;">RFQ</div>
<div class="t" style="left:941.10px;top:579.00px;font-size:10px;color:#555555;font-weight:bold;transform:scaleX(1.0420);transform-origin:0 0;">136,489.30</div>
</body></html>
